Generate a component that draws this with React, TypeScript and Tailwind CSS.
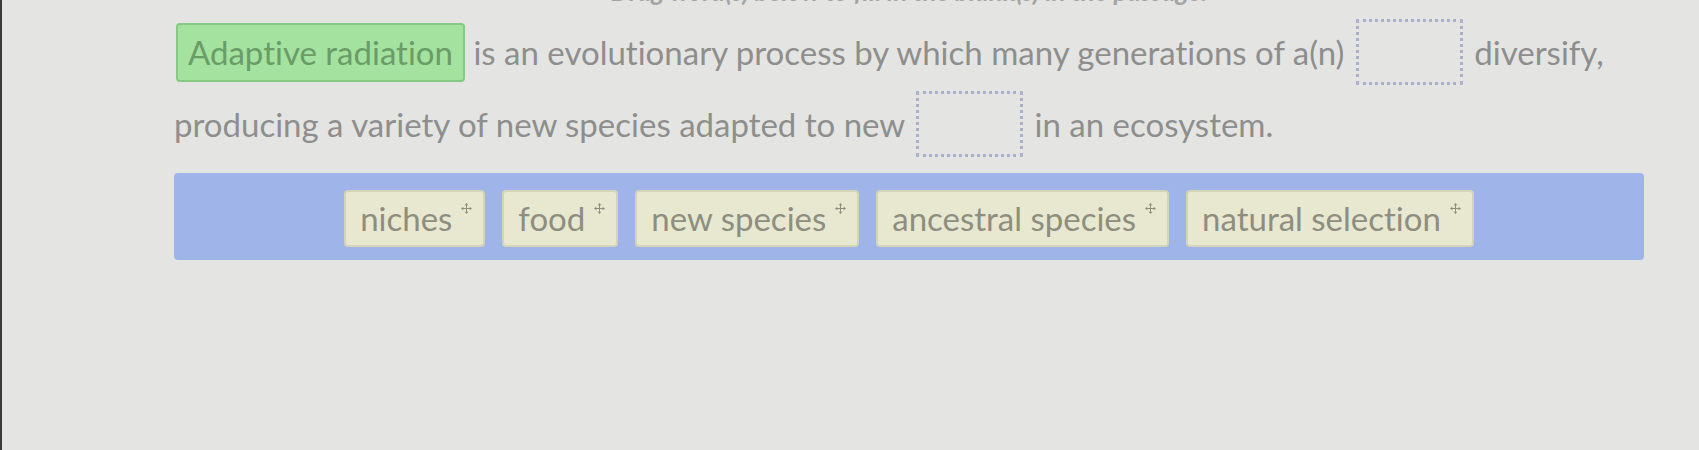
import React from "react";

function MoveIcon() {
  return (
    <svg width="11" height="11" viewBox="0 0 10 10" className="block" fill="#8d8d7e" stroke="#8d8d7e">
      <line x1="5" y1="1" x2="5" y2="9" strokeWidth="0.9" />
      <line x1="1" y1="5" x2="9" y2="5" strokeWidth="0.9" />
      <polygon points="5,0 3.3,2.1 6.7,2.1" stroke="none" />
      <polygon points="5,10 3.3,7.9 6.7,7.9" stroke="none" />
      <polygon points="0,5 2.1,3.3 2.1,6.7" stroke="none" />
      <polygon points="10,5 7.9,3.3 7.9,6.7" stroke="none" />
    </svg>
  );
}

function Chip({ label }: { label: string }) {
  return (
    <div className="flex h-[57px] items-start rounded-[4px] border-2 border-[#d4d4b8] bg-[#e8e8d0] pl-[14px] pr-[11px] pt-[8px]">
      <span className="text-[33px] leading-[37px] text-[#8e8e80]">{label}</span>
      <span className="ml-[9px] mt-[3px]">
        <MoveIcon />
      </span>
    </div>
  );
}

function Blank() {
  return (
    <span className="mx-[3px] inline-block h-[66px] w-[107px] rounded-[2px] border-[3px] border-dotted border-[#a9b0cb] align-[-20px]" />
  );
}

export default function App() {
  const words = ["niches", "food", "new species", "ancestral species", "natural selection"];
  return (
    <div
      className="min-h-screen w-full overflow-hidden border-l-2 border-[#3a3a3a] bg-[#e4e5e2] [font-variant-ligatures:none]"
      style={{ fontFamily: "Lato, 'Open Sans', sans-serif" }}
    >
      <div className="ml-[172px] w-[1470px]">
        <div className="-mt-[23px] text-center text-[26px] font-bold italic leading-[28px] text-[#a4a4a4]">
          Drag word(s) below to fill in the blank(s) in the passage.
        </div>
        <p className="mt-[11px] text-[33px] leading-[72px] text-[#8e8e8e]">
          <span className="ml-[2px] inline-block rounded-[4px] border-2 border-[#86c984] bg-[#a4e2a0] px-[10px] py-[9px] leading-[37px] text-[#6a9c68]">
            Adaptive radiation
          </span>{" "}
          is an evolutionary process by which many generations of a(n) <Blank /> diversify,
          <br />
          producing a variety of new species adapted to new <Blank /> in an ecosystem.
        </p>
        <div className="mt-[13px] flex h-[87px] items-center justify-center gap-[17px] rounded-[4px] bg-[#9fb5ea] pt-[3px]">
          {words.map((w) => (
            <Chip key={w} label={w} />
          ))}
        </div>
      </div>
    </div>
  );
}
